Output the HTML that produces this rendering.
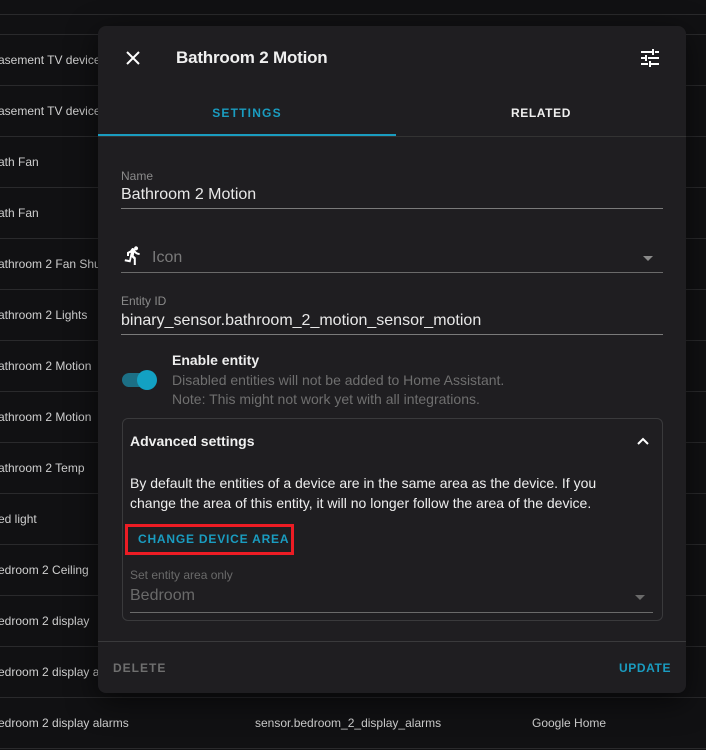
<!DOCTYPE html><html><head><style>
*{margin:0;padding:0;box-sizing:border-box}
body{width:706px;height:750px;overflow:hidden;background:#111113;font-family:"Liberation Sans",sans-serif;position:relative;color:#e1e1e1}
.a{position:absolute;white-space:nowrap}
.row{position:absolute;left:0;width:706px;height:1px;background:#2a2a2c}
.bt{font-size:12px;color:#cfcfcf}
.dlg{position:absolute;left:98px;top:26px;width:588px;height:667px;background:#1f1e21;border-radius:8px;box-shadow:0 8px 30px rgba(0,0,0,.6)}
.lbl{font-size:12px;color:#8a8a8a}
.val{font-size:16px;color:#e8e8e8}
.ul{position:absolute;height:1px;background:#7a7a7a}
.sub{font-size:14px;color:#6f6f6f}
</style></head><body>
<div class="row" style="top:14px"></div>
<div class="row" style="top:34px"></div>
<div class="row" style="top:85px"></div>
<div class="row" style="top:136px"></div>
<div class="row" style="top:187px"></div>
<div class="row" style="top:238px"></div>
<div class="row" style="top:289px"></div>
<div class="row" style="top:340px"></div>
<div class="row" style="top:391px"></div>
<div class="row" style="top:442px"></div>
<div class="row" style="top:493px"></div>
<div class="row" style="top:544px"></div>
<div class="row" style="top:595px"></div>
<div class="row" style="top:646px"></div>
<div class="row" style="top:697px"></div>
<div class="row" style="top:748px"></div>
<div class="a bt" style="left:-2px;top:53px">asement TV device</div>
<div class="a bt" style="left:-2px;top:104px">asement TV device</div>
<div class="a bt" style="left:-2px;top:155px">ath Fan</div>
<div class="a bt" style="left:-2px;top:206px">ath Fan</div>
<div class="a bt" style="left:-2px;top:257px">athroom 2 Fan Shu</div>
<div class="a bt" style="left:-2px;top:308px">athroom 2 Lights</div>
<div class="a bt" style="left:-2px;top:359px">athroom 2 Motion</div>
<div class="a bt" style="left:-2px;top:410px">athroom 2 Motion</div>
<div class="a bt" style="left:-2px;top:461px">athroom 2 Temp</div>
<div class="a bt" style="left:-2px;top:512px">ed light</div>
<div class="a bt" style="left:-2px;top:563px">edroom 2 Ceiling</div>
<div class="a bt" style="left:-2px;top:614px">edroom 2 display</div>
<div class="a bt" style="left:-2px;top:665px">edroom 2 display a</div>
<div class="a bt" style="left:-2px;top:716px">edroom 2 display alarms</div>
<div class="a bt" style="left:255px;top:716px">sensor.bedroom_2_display_alarms</div>
<div class="a bt" style="left:532px;top:716px">Google Home</div>

<div class="dlg">
<svg class="a" style="left:26px;top:23px" width="18" height="18" viewBox="0 0 18 18"><path d="M3 3L15 15M15 3L3 15" stroke="#fff" stroke-width="2"/></svg>
<div class="a" style="left:78px;top:22px;font-size:17px;font-weight:bold;color:#f0f0f0;letter-spacing:-0.2px">Bathroom 2 Motion</div>
<svg class="a" style="left:542px;top:22px" width="20" height="20" viewBox="0 0 20 20" fill="#fff"><rect x="1" y="3" width="11" height="2"/><rect x="15" y="3" width="4" height="2"/><rect x="12" y="1" width="2" height="6"/><rect x="1" y="9" width="4" height="2"/><rect x="8" y="9" width="11" height="2"/><rect x="5" y="7" width="2" height="6"/><rect x="1" y="15" width="7" height="2"/><rect x="11" y="15" width="8" height="2"/><rect x="9" y="13" width="2" height="6"/></svg>
<div class="a" style="left:0;top:80px;width:298px;text-align:center;font-size:12px;font-weight:bold;letter-spacing:1.2px;color:#1a9cc0">SETTINGS</div>
<div class="a" style="left:298px;top:80px;width:290px;text-align:center;font-size:12px;font-weight:bold;letter-spacing:.6px;color:#f0f0f0">RELATED</div>
<div class="a" style="left:0;top:108px;width:298px;height:2px;background:#1a9cc0"></div>
<div class="a" style="left:0;top:110px;width:588px;height:1px;background:#333"></div>

<div class="a lbl" style="left:23px;top:143px">Name</div>
<div class="a val" style="left:23px;top:160px">Bathroom 2 Motion</div>
<div class="ul" style="left:23px;top:182px;width:542px"></div>

<svg class="a" style="left:22px;top:216px" width="24" height="26" viewBox="0 0 24 24" fill="#fff"><path d="M14.1 5.3a2 2 0 1 0 0-0.01zM10.2 7.6L7 9.3V13h2v-2.5l1.8-.8L9.2 17 5 16.2l-.4 2 5.9 1.2 1.2-5.3 2.1 2V22h2v-7.4l-2.1-2 .6-3c1.3 1.5 3.2 2.4 5.3 2.4v-2c-1.8 0-3.4-1-4.2-2.4l-1-1.6c-.4-.6-1-1-1.7-1-.3 0-.6.1-.8.2z"/></svg>
<div class="a" style="left:54px;top:223px;font-size:16px;color:#7a7a7a">Icon</div>
<svg class="a" style="left:545px;top:230px" width="10" height="6"><path d="M0 0h10L5 5z" fill="#8a8a8a"/></svg>
<div class="ul" style="left:23px;top:246px;width:542px;background:#6a6a6a"></div>

<div class="a lbl" style="left:23px;top:268px">Entity ID</div>
<div class="a val" style="left:23px;top:286px">binary_sensor.bathroom_2_motion_sensor_motion</div>
<div class="ul" style="left:23px;top:308px;width:542px"></div>

<div class="a" style="left:24px;top:347px;width:34px;height:14px;border-radius:7px;background:#1c6f85"></div>
<div class="a" style="left:39px;top:344px;width:20px;height:20px;border-radius:50%;background:#13a1c3"></div>
<div class="a" style="left:74px;top:326px;font-size:14px;font-weight:bold;color:#eee">Enable entity</div>
<div class="a sub" style="left:74px;top:346px">Disabled entities will not be added to Home Assistant.</div>
<div class="a sub" style="left:74px;top:365px">Note: This might not work yet with all integrations.</div>

<div class="a" style="left:24px;top:392px;width:541px;height:203px;border:1px solid #3a3a3c;border-radius:6px"></div>
<div class="a" style="left:32px;top:407px;font-size:14px;font-weight:bold;color:#f0f0f0">Advanced settings</div>
<svg class="a" style="left:538px;top:410px" width="14" height="10"><path d="M2 8l5-5 5 5" stroke="#fff" stroke-width="2" fill="none"/></svg>
<div class="a" style="left:32px;top:447px;font-size:14px;line-height:20px;color:#eee">By default the entities of a device are in the same area as the device. If you<br>change the area of this entity, it will no longer follow the area of the device.</div>
<div class="a" style="left:27px;top:498px;width:169px;height:31px;border:3px solid #ec1c24"></div>
<div class="a" style="left:40px;top:506px;font-size:12px;font-weight:bold;letter-spacing:.8px;color:#1a9cc0">CHANGE DEVICE AREA</div>
<div class="a lbl" style="left:32px;top:542px;color:#6a6a6a">Set entity area only</div>
<div class="a" style="left:32px;top:561px;font-size:16px;color:#6a6a6a">Bedroom</div>
<svg class="a" style="left:537px;top:569px" width="10" height="6"><path d="M0 0h10L5 5z" fill="#6a6a6a"/></svg>
<div class="ul" style="left:32px;top:586px;width:523px;background:#6a6a6a"></div>

<div class="a" style="left:0;top:615px;width:588px;height:1px;background:#3a3a3c"></div>
<div class="a" style="left:15px;top:635px;font-size:12px;font-weight:bold;letter-spacing:1px;color:#6f6f6f">DELETE</div>
<div class="a" style="left:521px;top:635px;font-size:12px;font-weight:bold;letter-spacing:.6px;color:#1a9cc0">UPDATE</div>
</div>
</body></html>
